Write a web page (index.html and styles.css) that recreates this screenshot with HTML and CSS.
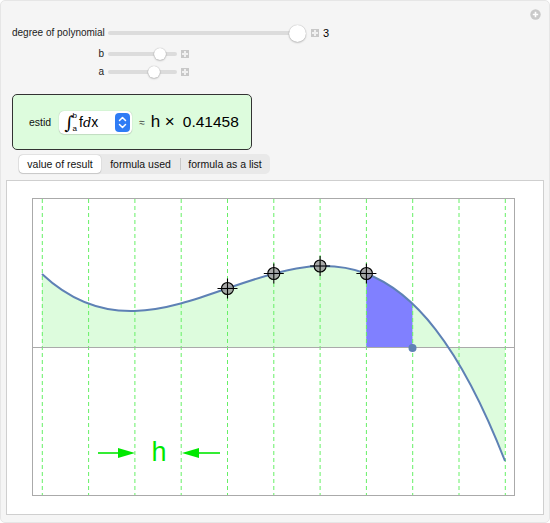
FILE: index.html
```html
<!DOCTYPE html>
<html>
<head>
<meta charset="utf-8">
<link rel="stylesheet" href="styles.css">
</head>
<body>
<div class="panel">
  <span class="corner-btn"><svg width="11" height="11" viewBox="0 0 11 11"><circle cx="5.5" cy="5.5" r="5.2" fill="#c9c9c9"/><path d="M5.5 2.8v5.4M2.8 5.5h5.4" stroke="#fff" stroke-width="1.6"/></svg></span>

  <div class="controls">
    <span class="lbl">degree of polynomial</span>
    <div class="slider-row">
      <div class="track long"><span class="thumb big" style="left:189px"></span></div>
      <span class="plus"></span>
      <span class="val">3</span>
    </div>
    <span class="lbl">b</span>
    <div class="slider-row">
      <div class="track short"><span class="thumb" style="left:52px"></span></div>
      <span class="plus"></span>
    </div>
    <span class="lbl">a</span>
    <div class="slider-row">
      <div class="track short"><span class="thumb" style="left:46px"></span></div>
      <span class="plus"></span>
    </div>
  </div>

  <div class="result">
    <span class="estid">estid</span>
    <div class="popup">
      <span class="formula"><span class="intg">∫</span><span class="lims"><span class="up">b</span><span class="lo">a</span></span><span class="fdx">f<i>d</i>x</span></span>
      <span class="stepper"><svg width="15" height="19" viewBox="0 0 15 19"><path d="M4.5 7.5l3-3 3 3M4.5 11.5l3 3 3-3" stroke="#fff" stroke-width="1.5" fill="none" stroke-linecap="round" stroke-linejoin="round"/></svg></span>
    </div>
    <span class="approx">≈</span>
    <span class="hx">h ×</span>
    <span class="num">0.41458</span>
  </div>

  <div class="tabs">
    <span class="tab active">value of result</span>
    <span class="tab">formula used</span>
    <span class="sep"></span>
    <span class="tab">formula as a list</span>
  </div>

  <div class="plot">
    <svg width="536" height="333" viewBox="7 182 536 333">
      <defs>
        <clipPath id="strip"><rect x="366.2" y="190" width="46.3" height="320"/></clipPath>
      </defs>
      <path d="M42,348 L42,275 C196.3,419.6 350.7,66.7 505,462 L505,348 Z" fill="#ddfcdd"/>
      <path d="M42,348 L42,275 C196.3,419.6 350.7,66.7 505,462 L505,348 Z" fill="#8080ff" clip-path="url(#strip)"/>
      <g stroke="#66f066" stroke-width="1" stroke-dasharray="4,3">
        <line x1="42.3" y1="200" x2="42.3" y2="497"/>
        <line x1="88.6" y1="200" x2="88.6" y2="497"/>
        <line x1="134.9" y1="200" x2="134.9" y2="497"/>
        <line x1="181.2" y1="200" x2="181.2" y2="497"/>
        <line x1="227.5" y1="200" x2="227.5" y2="497"/>
        <line x1="273.8" y1="200" x2="273.8" y2="497"/>
        <line x1="320.1" y1="200" x2="320.1" y2="497"/>
        <line x1="366.4" y1="200" x2="366.4" y2="497"/>
        <line x1="412.7" y1="200" x2="412.7" y2="497"/>
        <line x1="459" y1="200" x2="459" y2="497"/>
        <line x1="505.3" y1="200" x2="505.3" y2="497"/>
      </g>
      <rect x="32.5" y="199.5" width="482" height="297" fill="none" stroke="#aaa" stroke-width="1"/>
      <line x1="32.5" y1="348.5" x2="514.5" y2="348.5" stroke="#aaa" stroke-width="1"/>
      <path d="M42,275 C196.3,419.6 350.7,66.7 505,462" fill="none" stroke="#5e81b5" stroke-width="2"/>
      <circle cx="412.5" cy="349" r="4" fill="#5e81b5"/>
      <g stroke="#000" stroke-width="1.1">
        <circle cx="227.5" cy="289.5" r="6" fill="#9a9a9a" fill-opacity="0.85"/>
        <path d="M217.5 289.5h20M227.5 279.5v20"/>
        <circle cx="273.8" cy="274.5" r="6" fill="#9a9a9a" fill-opacity="0.85"/>
        <path d="M263.8 274.5h20M273.8 264.5v20"/>
        <circle cx="320.1" cy="267" r="6" fill="#9a9a9a" fill-opacity="0.85"/>
        <path d="M310.1 267h20M320.1 257v20"/>
        <circle cx="366.4" cy="274.5" r="6" fill="#9a9a9a" fill-opacity="0.85"/>
        <path d="M356.4 274.5h20M366.4 264.5v20"/>
      </g>
      <g fill="#00e800" stroke="#00e800">
        <line x1="98" y1="454" x2="120" y2="454" stroke-width="1.6"/>
        <polygon points="118,449 135,454 118,459" stroke="none"/>
        <line x1="198" y1="454" x2="220" y2="454" stroke-width="1.6"/>
        <polygon points="199,449 182,454 199,459" stroke="none"/>
        <text x="159" y="462" font-family="Liberation Sans, Arial, sans-serif" font-size="27" text-anchor="middle" stroke="none">h</text>
      </g>
    </svg>
  </div>
</div>
</body>
</html>
```

FILE: styles.css
```css
* { box-sizing: border-box; }
html, body { margin: 0; padding: 0; background: #fff; }
body { font-family: "Liberation Sans", Arial, sans-serif; color: #222; }

.panel {
  position: relative;
  width: 550px;
  height: 523px;
  background: #f5f5f5;
  border: 1px solid #e6e6e6;
  border-radius: 5px;
  padding-top: 22px;
}

.corner-btn {
  position: absolute;
  top: 8px;
  right: 8px;
  width: 11px;
  height: 11px;
  line-height: 0;
}

.controls {
  display: grid;
  grid-template-columns: 92px auto;
  column-gap: 4px;
  row-gap: 4px;
  margin-left: 11px;
  align-items: center;
  font-size: 10px;
}
.controls .lbl { text-align: right; white-space: nowrap; line-height: 14px; }
.slider-row { display: flex; align-items: center; height: 14px; }
.slider-row:first-of-type { height: 20px; }
.controls > .lbl:first-child { line-height: 20px; }

.track {
  position: relative;
  height: 4px;
  background: #dcdcdc;
  border-radius: 2px;
}
.track.long { width: 197px; }
.track.short { width: 69px; }
.thumb {
  position: absolute;
  top: 50%;
  width: 12px;
  height: 12px;
  margin-left: -6px;
  margin-top: -6px;
  border-radius: 50%;
  background: #fff;
  box-shadow: 0 0 1px rgba(0,0,0,0.35), 0 1px 2px rgba(0,0,0,0.2);
}
.thumb.big {
  width: 17px;
  height: 17px;
  margin-left: -8.5px;
  margin-top: -8.5px;
}
.plus {
  width: 8px;
  height: 8px;
  margin-left: 4px;
  background: #c8c8c8;
  position: relative;
}
.track.long + .plus { margin-left: 6px; }
.plus::before, .plus::after {
  content: "";
  position: absolute;
  background: #f0f0f0;
}
.plus::before { left: 3px; top: 1px; width: 2px; height: 6px; }
.plus::after { left: 1px; top: 3px; width: 6px; height: 2px; }
.val { margin-left: 4px; font-size: 11px; color: #000; }

.result {
  display: flex;
  align-items: center;
  width: 240px;
  height: 56px;
  margin: 15px 0 0 11px;
  padding-left: 16px;
  background: #ddfcdd;
  border: 1px solid #333;
  border-radius: 5px;
}
.estid { font-size: 10.5px; color: #111; }
.popup {
  display: flex;
  align-items: center;
  justify-content: space-between;
  width: 73px;
  height: 23px;
  margin-left: 8px;
  padding: 0 2px 0 5px;
  background: #fff;
  border-radius: 5px;
  box-shadow: 0 0 1px rgba(0,0,0,0.3), 0 1px 1px rgba(0,0,0,0.1);
}
.formula { display: flex; align-items: center; color: #000; height: 23px; }
.intg { font-family: "DejaVu Serif", serif; font-size: 18px; line-height: 18px; margin-top: 1px; }
.lims { display: flex; flex-direction: column; justify-content: space-between; height: 21px; font-size: 8px; line-height: 8px; margin-left: -1px; }
.fdx { font-size: 14px; margin-left: 2px; }
.fdx i { font-style: italic; font-family: "DejaVu Serif", serif; font-size: 13px; }
.stepper {
  width: 15px;
  height: 19px;
  background: #2f7cf5;
  border-radius: 4px;
  line-height: 0;
}
.approx { font-size: 10px; margin-left: 7px; color: #333; }
.hx { font-size: 17px; margin-left: 6px; color: #000; }
.num { font-size: 15.5px; margin-left: 8px; color: #000; }

.tabs {
  display: flex;
  align-items: center;
  width: 252px;
  height: 20px;
  margin: 4px 0 0 17px;
  padding: 1px;
  background: #e9e9e9;
  border-radius: 5px;
  font-size: 10.5px;
  color: #111;
}
.tab {
  flex: none;
  height: 18px;
  line-height: 18px;
  text-align: center;
}
.tab:nth-child(1) { width: 82px; }
.tab:nth-child(2) { width: 79px; }
.tab:nth-child(4) { width: 88px; }
.tab.active {
  background: #fff;
  border-radius: 4px;
  box-shadow: 0 0 1px rgba(0,0,0,0.3), 0 1px 1px rgba(0,0,0,0.12);
}
.sep { width: 1px; height: 12px; background: #c8c8c8; }

.plot {
  width: 538px;
  height: 335px;
  margin: 6px 0 0 5px;
  background: #fff;
  border: 1px solid #cfcfcf;
  line-height: 0;
}
```
